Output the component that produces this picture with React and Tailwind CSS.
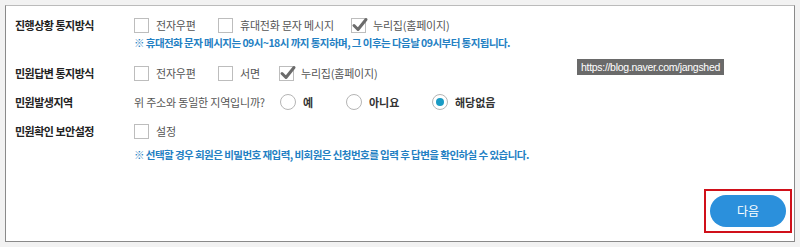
import React from 'react';

const font = { fontFamily: '"Noto Sans CJK KR", "Noto Sans", sans-serif' };

function Box({ checked }) {
  return (
    <span className="relative inline-block w-[15px] h-[15px] border border-[#bdbdbd] bg-white shrink-0">
      {checked && (
        <svg className="absolute -left-[1px] -top-[3px]" width="18" height="18" viewBox="0 0 18 18">
          <path d="M3 9.5 L7 13.5 L15 3.5" fill="none" stroke="#6b6b6b" strokeWidth="3" strokeLinecap="round" strokeLinejoin="round" />
        </svg>
      )}
    </span>
  );
}

function Check({ label, checked, w }) {
  return (
    <label className={`flex items-center gap-[7px] ${w}`}>
      <Box checked={checked} />
      <span className="text-[11px] tracking-[-0.2px] text-[#555] whitespace-nowrap">{label}</span>
    </label>
  );
}

function Radio({ label, selected, w }) {
  return (
    <label className={`flex items-center gap-[7px] ${w}`}>
      <span className="w-[16px] h-[16px] rounded-full border border-[#b5b5b5] bg-white flex items-center justify-center shrink-0">
        {selected && <span className="w-[8px] h-[8px] rounded-full bg-[#1a9bc4]" />}
      </span>
      <span className="text-[11px] font-bold text-[#333]">{label}</span>
    </label>
  );
}

function Row({ title, children }) {
  return (
    <div className="flex items-center h-[20px]">
      <div className="w-[119px] text-[11px] font-bold tracking-[-0.5px] text-[#222]">{title}</div>
      <div className="flex items-center">{children}</div>
    </div>
  );
}

export default function App() {
  return (
    <div className="w-[800px] h-[247px] bg-[#f2f2f2] p-[5px]" style={font}>
      <div className="relative w-[790px] h-[237px] bg-white border border-[#8a8a8a] border-t-[#bbb] pl-[9px] pt-[9px]">
        <Row title="진행상황 통지방식">
          <Check label="전자우편" w="w-[84px]" />
          <Check label="휴대전화 문자 메시지" w="w-[133px]" />
          <Check label="누리집(홈페이지)" checked />
        </Row>
        <p className="ml-[119px] mt-0 text-[10.5px] font-bold tracking-[-0.55px] text-[#2380c3] leading-[16px] whitespace-nowrap">
          ※ 휴대전화 문자 메시지는 09시~18시 까지 통지하며, 그 이후는 다음날 09시부터 통지됩니다.
        </p>
        <div className="mt-[12px]">
          <Row title="민원답변 통지방식">
            <Check label="전자우편" w="w-[84px]" />
            <Check label="서면" w="w-[61px]" />
            <Check label="누리집(홈페이지)" checked />
          </Row>
        </div>
        <div className="mt-[9px]">
          <Row title="민원발생지역">
            <span className="w-[146px] text-[11px] tracking-[-0.2px] text-[#555] whitespace-nowrap">위 주소와 동일한 지역입니까?</span>
            <Radio label="예" w="w-[66px]" />
            <Radio label="아니요" w="w-[86px]" />
            <Radio label="해당없음" selected />
          </Row>
        </div>
        <div className="mt-[9px]">
          <Row title="민원확인 보안설정">
            <Check label="설정" />
          </Row>
        </div>
        <p className="ml-[119px] mt-[4px] text-[10.5px] font-bold tracking-[-0.55px] text-[#2380c3] leading-[20px] whitespace-nowrap">
          ※ 선택할 경우 회원은 비밀번호 재입력, 비회원은 신청번호를 입력 후 답변을 확인하실 수 있습니다.
        </p>
        <div className="absolute right-[2px] bottom-[8px] border-2 border-[#d0101a] p-[4px]">
          <button className="w-[76px] h-[32px] rounded-full bg-[#2b90dc] text-white text-[12px]">다음</button>
        </div>
        <div className="absolute left-[571px] top-[53px] bg-[#6a6a6a] text-white text-[10.5px] tracking-[-0.3px] px-[4px] h-[16px] leading-[16px]" style={{ fontFamily: '"Liberation Sans", Arial, sans-serif' }}>
          https://blog.naver.com/jangshed
        </div>
      </div>
    </div>
  );
}
